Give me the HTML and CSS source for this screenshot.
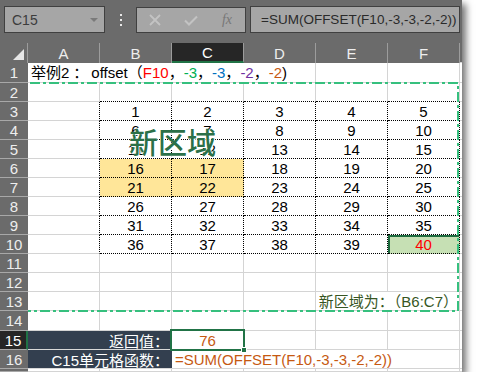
FILE: index.html
```html
<!DOCTYPE html>
<html>
<head>
<meta charset="utf-8">
<link rel="stylesheet" href="styles.css">
</head>
<body>
<div class="app">
  <div class="topbar">
    <div class="namebox"><span>C15</span><i class="arrow"></i></div>
    <div class="dots"><i></i><i></i><i></i></div>
    <div class="iconbox">
      <span class="ic"><svg width="12" height="12" viewBox="0 0 12 12"><path d="M1 1L11 11M11 1L1 11" stroke="#c3c3c3" stroke-width="1.8" fill="none"/></svg></span>
      <span class="ic"><svg width="14" height="11" viewBox="0 0 14 11"><path d="M1 5.5L5 9.5L13 1.5" stroke="#c3c3c3" stroke-width="2" fill="none"/></svg></span>
      <span class="ic fx">fx</span>
    </div>
    <div class="formula">=SUM(OFFSET(F10,-3,-3,-2,-2))</div>
  </div>
  <div class="sheet">
    <div class="corner"><i></i></div>
    <div class="ch">A</div><div class="ch">B</div><div class="ch sel">C</div><div class="ch">D</div><div class="ch">E</div><div class="ch">F</div><div class="ch z"></div>

    <div class="rh">1</div>
    <div class="c nr"><span>举例2<span class="fw">：</span>offset（<span class="red">F10</span>，<span class="gr">-3</span>，<span class="bl">-3</span>，<span class="pu">-2</span>，<span class="or">-2</span>)</span></div>
    <div class="c nr"></div><div class="c nr"></div><div class="c"></div><div class="c"></div><div class="c"></div><div class="z"></div>

    <div class="rh">2</div>
    <div class="c"></div><div class="c dt"></div><div class="c dt"></div><div class="c dt"></div><div class="c dt"></div><div class="c dt"></div><div class="z"></div>

    <div class="rh">3</div>
    <div class="c dl"></div><div class="c d">1</div><div class="c d">2</div><div class="c d">3</div><div class="c d">4</div><div class="c d">5</div><div class="z"></div>

    <div class="rh">4</div>
    <div class="c dl"></div><div class="c d">6</div><div class="c d">7</div><div class="c d">8</div><div class="c d">9</div><div class="c d">10</div><div class="z"></div>

    <div class="rh">5</div>
    <div class="c dl"></div><div class="c d">11</div><div class="c d">12</div><div class="c d">13</div><div class="c d">14</div><div class="c d">15</div><div class="z"></div>

    <div class="rh">6</div>
    <div class="c dl"></div><div class="c d y">16</div><div class="c d y">17</div><div class="c d">18</div><div class="c d">19</div><div class="c d">20</div><div class="z"></div>

    <div class="rh">7</div>
    <div class="c dl"></div><div class="c d y">21</div><div class="c d y">22</div><div class="c d">23</div><div class="c d">24</div><div class="c d">25</div><div class="z"></div>

    <div class="rh">8</div>
    <div class="c dl"></div><div class="c d">26</div><div class="c d">27</div><div class="c d">28</div><div class="c d">29</div><div class="c d">30</div><div class="z"></div>

    <div class="rh">9</div>
    <div class="c dl"></div><div class="c d">31</div><div class="c d">32</div><div class="c d">33</div><div class="c d">34</div><div class="c d">35</div><div class="z"></div>

    <div class="rh">10</div>
    <div class="c dl"></div><div class="c d">36</div><div class="c d">37</div><div class="c d">38</div><div class="c d">39</div><div class="c d g">40</div><div class="z"></div>

    <div class="rh">11</div>
    <div class="c"></div><div class="c"></div><div class="c"></div><div class="c"></div><div class="c"></div><div class="c"></div><div class="z"></div>

    <div class="rh">12</div>
    <div class="c"></div><div class="c"></div><div class="c"></div><div class="c"></div><div class="c"></div><div class="c"></div><div class="z"></div>

    <div class="rh">13</div>
    <div class="c"></div><div class="c"></div><div class="c"></div><div class="c"></div><div class="c nr"></div><div class="c r note"><span>新区域为：（B6:C7）</span></div><div class="z"></div>

    <div class="rh">14</div>
    <div class="c"></div><div class="c"></div><div class="c"></div><div class="c"></div><div class="c"></div><div class="c"></div><div class="z"></div>

    <div class="rh rsel">15</div>
    <div class="navy">返回值：</div><div class="c n or">76</div><div class="c"></div><div class="c"></div><div class="c"></div><div class="z"></div>

    <div class="rh">16</div>
    <div class="navy">C15单元格函数：</div><div class="c nr or"><span>=SUM(OFFSET(F10,-3,-3,-2,-2))</span></div><div class="c nr"></div><div class="c nr"></div><div class="c"></div><div class="z"></div>

    <div class="rh"></div>
    <div class="c"></div><div class="c"></div><div class="c"></div><div class="c"></div><div class="c"></div><div class="c"></div><div class="z"></div>

    <svg class="frame" width="462" height="329" viewBox="0 0 462 329">
      <path d="M30 40H458V268H28" stroke="#36c07e" stroke-width="2" fill="none" stroke-dasharray="10 3 3 3"/>
    </svg>
    <div class="bigtext">新区域</div>
    <div class="selbox"></div>
    <div class="handle"></div>
  </div>
</div>
</body>
</html>
```
FILE: styles.css
```css
html, body {
  margin: 0;
  padding: 0;
  background: #fff;
}
.app {
  width: 462px;
  height: 372px;
  background: #6b6b6b;
  box-shadow: 4px 4px 7px rgba(0, 0, 0, 0.55);
  overflow: hidden;
  font-family: "Liberation Sans", "Noto Sans CJK SC", sans-serif;
}
.topbar {
  height: 43px;
  box-sizing: border-box;
  display: flex;
  align-items: flex-start;
  padding: 6px 0 0 4px;
}
.namebox {
  width: 101px;
  height: 27px;
  box-sizing: border-box;
  background: #a6a6a6;
  border: 1px solid #404040;
  display: flex;
  align-items: center;
  justify-content: space-between;
  padding: 0 6px 0 7px;
  font-size: 14px;
  color: #3c3c3c;
}
.arrow {
  width: 0;
  height: 0;
  border-left: 4px solid transparent;
  border-right: 4px solid transparent;
  border-top: 4px solid #7a7a7a;
  margin-top: 1px;
}
.dots {
  width: 31px;
  height: 27px;
  display: flex;
  flex-direction: column;
  align-items: center;
  justify-content: center;
  gap: 3px;
}
.dots i {
  width: 2px;
  height: 2px;
  background: #e8e8e8;
}
.iconbox {
  width: 110px;
  height: 26px;
  margin-top: 1px;
  box-sizing: border-box;
  background: #a6a6a6;
  border: 1px solid #404040;
  display: flex;
  align-items: center;
}
.ic {
  width: 36px;
  display: flex;
  justify-content: center;
  align-items: center;
}
.ic.fx {
  font-family: "Liberation Serif", serif;
  font-style: italic;
  font-size: 14px;
  color: #777;
}
.formula {
  margin-left: 4px;
  width: 210px;
  height: 27px;
  box-sizing: border-box;
  background: #a6a6a6;
  border: 1px solid #404040;
  padding-left: 10px;
  font-size: 13.5px;
  line-height: 25px;
  color: #2a2a2a;
  white-space: nowrap;
}
.sheet {
  position: relative;
  display: grid;
  grid-template-columns: 28px repeat(6, 72px) 2px;
  grid-template-rows: 20px 20px repeat(12, 19px) 20px 19px 19px 3px;
  background: #fff;
  font-size: 15px;
}
.sheet > div {
  box-sizing: border-box;
}
.corner {
  background: #6b6b6b;
  border-right: 1px solid #9c9c9c;
  position: relative;
}
.corner i {
  position: absolute;
  right: 3px;
  bottom: 3px;
  width: 0;
  height: 0;
  border-left: 11px solid transparent;
  border-bottom: 11px solid #e6e6e6;
}
.ch {
  background: #6b6b6b;
  color: #eee;
  border-right: 1px solid #9c9c9c;
  display: flex;
  align-items: center;
  justify-content: center;
}
.ch.sel {
  background: #262626;
  color: #fff;
  border-bottom: 2px solid #217346;
}
.ch.z {
  border-right: none;
}
.rh {
  background: #6b6b6b;
  color: #eee;
  border-bottom: 1px solid #a8a8a8;
  display: flex;
  align-items: center;
  justify-content: center;
  overflow: hidden;
}
.rh.rsel {
  background: #262626;
  color: #fff;
  border-right: 2px solid #217346;
}
.c {
  border-right: 1px solid #d4d4d4;
  border-bottom: 1px solid #d4d4d4;
  display: flex;
  align-items: center;
  padding: 1px 3px 0;
  white-space: nowrap;
  color: #000;
  line-height: 18px;
}
.fw {
  display: inline-block;
  padding: 0 3px 0 4px;
}
.z {
  border-bottom: 1px solid #d4d4d4;
}
.nr {
  border-right: none;
}
.n, .d {
  justify-content: center;
}
.r {
  justify-content: flex-end;
}
.dt {
  border-bottom: 1px dotted #000;
}
.dl {
  border-right: 1px dotted #000;
}
.d {
  border-right: 1px dotted #000;
  border-bottom: 1px dotted #000;
}
.y {
  background: #ffe699;
}
.g {
  background: #c6e0b4;
  color: #ff0000;
  box-shadow: inset 2px 2px 0 #1e6b3f;
}
.red { color: #ff0000; }
.gr { color: #00b050; }
.bl { color: #0070c0; }
.pu { color: #7030a0; }
.or { color: #c65911; }
.note {
  color: #375623;
  padding-right: 1px;
}
.navy {
  grid-column: span 2;
  background: #333f4f;
  color: #fff;
  border-bottom: 1px solid #d9d9d9;
  display: flex;
  align-items: center;
  justify-content: flex-end;
  padding: 1px 3px 0;
  white-space: nowrap;
}
.frame {
  position: absolute;
  left: 0;
  top: 0;
}
.bigtext {
  position: absolute;
  left: 129px;
  top: 84px;
  font-family: "Noto Sans CJK SC", sans-serif;
  font-size: 29px;
  font-weight: 500;
  line-height: 1;
  color: #2b7048;
  text-shadow: 1px 1px 0 #fff;
}
.selbox {
  position: absolute;
  left: 170px;
  top: 286px;
  width: 75px;
  height: 22px;
  box-sizing: border-box;
  border: 2px solid #217346;
}
.handle {
  position: absolute;
  left: 241px;
  top: 304px;
  width: 6px;
  height: 6px;
  box-sizing: border-box;
  background: #217346;
  border: 1px solid #fff;
}
```
